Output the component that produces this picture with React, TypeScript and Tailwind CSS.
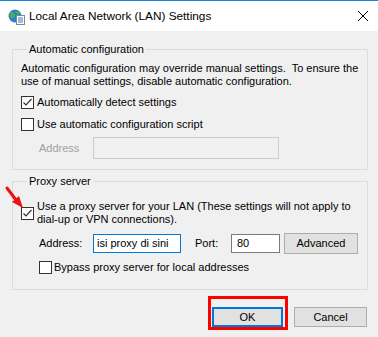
import React from "react";

function GlobeIcon() {
  return (
    <svg width="17" height="16" viewBox="0 0 17 16">
      <circle cx="7" cy="7" r="6.5" fill="#2f7fd0" />
      <path d="M2 4 C4 2 6 3 7 5 C8 7 6 8 5 9 C4 10 3 9 2 8 Z" fill="#49b04a" />
      <path d="M8 2 C10 2 12 3 12 5 C11 6 9 5 8 4 Z" fill="#49b04a" />
      <rect x="8.5" y="6.5" width="8" height="9" fill="#ffffff" stroke="#7a8a99" />
      <line x1="10" y1="9" x2="15" y2="9" stroke="#3a78c4" />
      <line x1="10" y1="11" x2="15" y2="11" stroke="#3a78c4" />
      <line x1="10" y1="13" x2="15" y2="13" stroke="#3a78c4" />
    </svg>
  );
}

function CheckBox({ checked }: { checked?: boolean }) {
  return (
    <span className="w-[13px] h-[13px] border border-[#333333] bg-white flex items-center justify-center shrink-0">
      {checked && (
        <svg width="11" height="11" viewBox="0 0 11 11">
          <path d="M1.5 5.5 L4 8 L9.5 2" fill="none" stroke="#333333" strokeWidth="1.2" />
        </svg>
      )}
    </span>
  );
}

export default function App() {
  return (
    <div
      className="relative w-[378px] h-[337px] bg-[#f0f0f0] text-[11px] text-black overflow-hidden whitespace-nowrap"
      style={{ fontFamily: '"Segoe UI", "Liberation Sans", Arial, sans-serif' }}
    >
      {/* title bar */}
      <div className="h-[31px] bg-white border-t border-[#1883d7] flex items-center">
        <div className="ml-[8px] mt-[1px]">
          <GlobeIcon />
        </div>
        <span className="ml-[4px] leading-[15px] text-[11.8px]">Local Area Network (LAN) Settings</span>
        <svg className="ml-auto mr-[10px]" width="10" height="10" viewBox="0 0 10 10">
          <path d="M0 0 L10 10 M10 0 L0 10" stroke="#000" strokeWidth="1" />
        </svg>
      </div>

      {/* automatic configuration */}
      <fieldset className="ml-[12px] mt-[11px] w-[356px] border border-[#dcdcdc] pl-[8px] pb-[10px]">
        <legend className="ml-[6px] px-[2px] leading-[14px]">Automatic configuration</legend>
        <p className="mt-[6px] leading-[13px]">
          Automatic configuration may override manual settings.&nbsp; To ensure the
          <br />
          use of manual settings, disable automatic configuration.
        </p>
        <label className="mt-[8px] flex items-center gap-[3px] h-[13px]">
          <CheckBox checked />
          <span>Automatically detect settings</span>
        </label>
        <label className="mt-[9px] flex items-center gap-[3px] h-[13px]">
          <CheckBox />
          <span>Use automatic configuration script</span>
        </label>
        <div className="mt-[6px] flex items-center h-[22px]">
          <span className="ml-[18px] w-[54px] text-[#a0a0a0]">Address</span>
          <div className="w-[186px] h-[22px] border border-[#cccccc] bg-[#f0f0f0]" />
        </div>
      </fieldset>

      {/* proxy server */}
      <fieldset className="ml-[12px] mt-[4px] w-[356px] border border-[#dcdcdc] pl-[8px] pb-[15px]">
        <legend className="ml-[6px] px-[2px] leading-[14px]">Proxy server</legend>
        <label className="mt-[12px] flex items-center gap-[3px]">
          <CheckBox checked />
          <span className="leading-[13px]">
            Use a proxy server for your LAN (These settings will not apply to
            <br />
            dial-up or VPN connections).
          </span>
        </label>
        <div className="mt-[7px] flex items-center h-[21px]">
          <span className="ml-[18px] w-[54px]">Address:</span>
          <div className="w-[88px] h-[19px] border border-[#0078d7] bg-white flex items-center pl-[3px]">
            isi proxy di sini
          </div>
          <span className="ml-[14px] w-[36px]">Port:</span>
          <div className="w-[49px] h-[19px] border border-[#7a7a7a] bg-white flex items-center pl-[5px]">
            80
          </div>
          <button className="ml-[4px] w-[74px] h-[21px] border border-[#adadad] bg-[#e1e1e1] leading-none">
            Advanced
          </button>
        </div>
        <label className="mt-[7px] ml-[18px] flex items-center gap-[2px] h-[13px]">
          <CheckBox />
          <span>Bypass proxy server for local addresses</span>
        </label>
      </fieldset>

      {/* buttons */}
      <div className="mt-[17px] flex justify-end pr-[11px] gap-[11px]">
        <div className="relative">
          <button className="w-[71px] h-[20px] border-2 border-[#0078d7] bg-[#e1e1e1] leading-none">
            OK
          </button>
          <div className="absolute left-[-4px] top-[-11px] w-[80px] h-[34px] border-[3px] border-[#ff0000] pointer-events-none" />
        </div>
        <button className="w-[73px] h-[20px] border border-[#adadad] bg-[#e1e1e1] leading-none">Cancel</button>
      </div>

      {/* red arrow annotation */}
      <svg className="absolute left-[4px] top-[185px]" width="22" height="26" viewBox="0 0 22 26">
        <line x1="3" y1="3" x2="12" y2="15" stroke="#ee1111" strokeWidth="3" strokeLinecap="round" />
        <polygon points="19,23 8,17 15,11" fill="#ee1111" />
      </svg>
    </div>
  );
}
